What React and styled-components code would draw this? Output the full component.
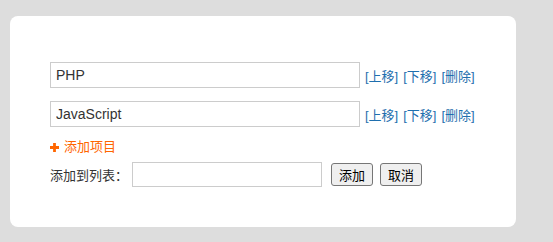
import React from "react";
import styled, { createGlobalStyle } from "styled-components";

const Global = createGlobalStyle`
  html, body { margin: 0; padding: 0; background: #dddddd; }
  body { font-family: "Liberation Sans", Arial, "Noto Sans CJK SC", sans-serif; }
`;

const Page = styled.div`
  padding: 16px 37px 16px 10px;
`;

const Card = styled.div`
  background: #fff;
  border-radius: 8px;
  padding: 46px 40px 40px 40px;
`;

const Row = styled.div`
  display: flex;
  align-items: center;
  margin-bottom: ${(p) => p.$gap ?? 13}px;
`;

const TextInput = styled.input`
  box-sizing: border-box;
  width: ${(p) => p.$w}px;
  height: ${(p) => p.$h ?? 26}px;
  border: 1px solid #cccccc;
  padding: 0 5px;
  margin: 0 ${(p) => p.$mr ?? 0}px 0 ${(p) => p.$ml ?? 0}px;
  font-family: "Liberation Sans", Arial, "Noto Sans CJK SC", sans-serif;
  font-size: 14px;
  color: #333;
  outline: none;
`;

const Actions = styled.div`
  margin-left: 5px;
  display: flex;
  gap: 5px;
  font-size: 13px;
`;

const ActionLink = styled.a`
  color: #1f6fae;
  text-decoration: none;
  cursor: pointer;
`;

const AddLink = styled.a`
  display: flex;
  width: fit-content;
  align-items: center;
  gap: 5px;
  color: #ff6600;
  font-size: 13px;
  line-height: 14px;
  height: 14px;
  text-decoration: none;
  margin: 0 0 8px 0;
  cursor: pointer;
`;

const Label = styled.span`
  font-size: 13px;
  color: #333;
`;

const Button = styled.button`
  font-family: "Liberation Sans", Arial, "Noto Sans CJK SC", sans-serif;
  font-size: 13px;
  color: #000;
  background: #efefef;
  border: 1px solid #767676;
  border-radius: 3px;
  padding: 1px 7px;
  height: 23px;
  margin-right: 7px;
`;

const PlusIcon = () => (
  <svg width="9" height="9" viewBox="0 0 9 9">
    <path d="M4.5 0v9M0 4.5h9" stroke="#ff6600" strokeWidth="2.8" />
  </svg>
);

const items = ["PHP", "JavaScript"];

export default function App() {
  return (
    <Page>
      <Global />
      <Card>
        {items.map((it) => (
          <Row key={it}>
            <TextInput $w={310} defaultValue={it} />
            <Actions>
              <ActionLink>[上移]</ActionLink>
              <ActionLink>[下移]</ActionLink>
              <ActionLink>[删除]</ActionLink>
            </Actions>
          </Row>
        ))}
        <AddLink>
          <PlusIcon />
          添加项目
        </AddLink>
        <Row $gap={0}>
          <Label>添加到列表：</Label>
          <TextInput $w={190} $h={25} $ml={4} $mr={9} />
          <Button>添加</Button>
          <Button>取消</Button>
        </Row>
      </Card>
    </Page>
  );
}
